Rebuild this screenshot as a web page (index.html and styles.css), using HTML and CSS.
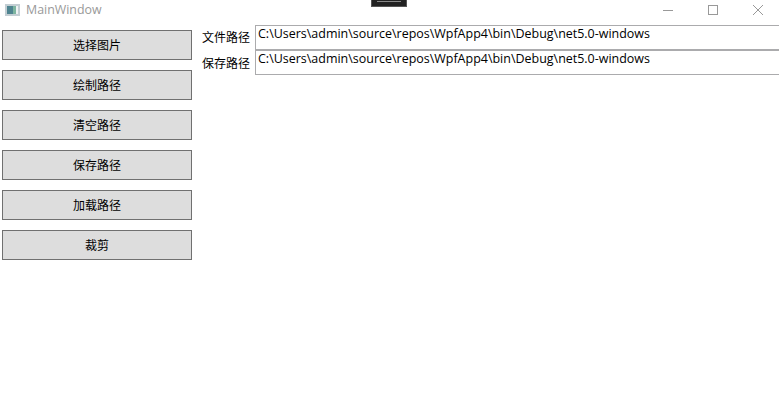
FILE: index.html
```html
<!DOCTYPE html>
<html lang="zh-CN">
<head>
  <meta charset="UTF-8" />
  <title>MainWindow</title>
  <link rel="stylesheet" href="styles.css">
</head>
<body>
  <div class="notch"><span class="notch-line"></span></div>
  <header class="titlebar">
    <svg class="app-icon" width="15" height="12" viewBox="0 0 15 12">
      <rect x="0" y="0" width="15" height="12" fill="#c3ced3"/>
      <rect x="2" y="2" width="6" height="8" fill="#4f8490"/>
      <rect x="8" y="2" width="3" height="8" fill="#7db5a0"/>
      <rect x="11" y="2" width="2" height="8" fill="#eef2f3"/>
    </svg>
    <span class="title">MainWindow</span>
    <div class="controls">
      <svg class="ctl" width="10" height="10" viewBox="0 0 10 10"><path d="M0 5.5H10" stroke="#999" fill="none"/></svg>
      <svg class="ctl" width="10" height="10" viewBox="0 0 10 10"><rect x="0.5" y="0.5" width="9" height="9" stroke="#999" fill="none"/></svg>
      <svg class="ctl" width="10" height="10" viewBox="0 0 10 10"><path d="M0 0L10 10M10 0L0 10" stroke="#999" fill="none"/></svg>
    </div>
  </header>
  <main class="content">
    <nav class="actions">
      <button class="btn">选择图片</button>
      <button class="btn">绘制路径</button>
      <button class="btn">清空路径</button>
      <button class="btn">保存路径</button>
      <button class="btn">加载路径</button>
      <button class="btn">裁剪</button>
    </nav>
    <section class="paths">
      <div class="path-row">
        <label class="path-label">文件路径</label>
        <div class="path-box">C:\Users\admin\source\repos\WpfApp4\bin\Debug\net5.0-windows</div>
      </div>
      <div class="path-row">
        <label class="path-label path-label-low">保存路径</label>
        <div class="path-box">C:\Users\admin\source\repos\WpfApp4\bin\Debug\net5.0-windows</div>
      </div>
    </section>
  </main>
</body>
</html>
```

FILE: styles.css
```css
html, body {
  margin: 0;
  height: 100%;
  overflow: hidden;
}

body {
  background: #fff;
  color: #000;
  font-family: "Open Sans", "Noto Sans CJK SC", sans-serif;
  font-size: 12px;
}

.notch {
  position: absolute;
  left: 371px;
  top: 0;
  width: 36px;
  height: 7px;
  background: #222;
  border: 1px solid #555;
  border-top: 0;
  box-sizing: border-box;
}

.notch-line {
  position: absolute;
  left: 5px;
  right: 5px;
  top: 1px;
  height: 1px;
  background: #888;
}

.titlebar {
  display: flex;
  align-items: center;
  height: 25px;
  padding: 0 16px 6px 5px;
  box-sizing: border-box;
}

.title {
  margin-left: 6px;
  color: #999;
  font-size: 12.4px;
}

.controls {
  display: flex;
  gap: 35px;
  margin-left: auto;
}

.content {
  display: flex;
}

.actions {
  display: flex;
  flex-direction: column;
  gap: 10px;
  width: 190px;
  margin: 5px 0 0 2px;
}

.btn {
  height: 30px;
  padding: 0;
  background: #ddd;
  border: 1px solid #707070;
  color: #000;
  font: inherit;
}

.paths {
  flex: 1;
  margin-left: 10px;
}

.path-row {
  display: flex;
  height: 25px;
}

.path-label {
  width: 53px;
  padding-top: 4px;
  line-height: 18px;
  box-sizing: border-box;
}

.path-label-low {
  padding-top: 5px;
}

.path-box {
  flex: 1;
  border: 1px solid #ababad;
  border-right: 0;
  padding-left: 2px;
  font-size: 12.48px;
  line-height: 15px;
  white-space: nowrap;
}
```
